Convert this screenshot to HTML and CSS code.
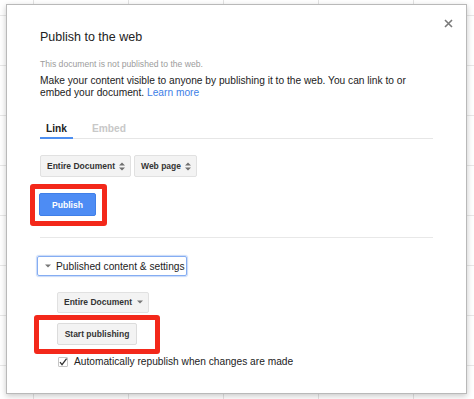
FILE: index.html
```html
<!DOCTYPE html>
<html lang="en">
<head>
<meta charset="utf-8">
<title>Publish to the web</title>
<link rel="stylesheet" href="styles.css">
</head>
<body>
<div class="sheet">
  <div class="dialog">
    <button class="close" aria-label="Close">
      <svg width="9" height="9" viewBox="0 0 9 9"><path d="M1 1L8 8M8 1L1 8" stroke="#7a7a7a" stroke-width="1.6" fill="none"/></svg>
    </button>
    <h1 class="title">Publish to the web</h1>
    <p class="note">This document is not published to the web.</p>
    <p class="desc">Make your content visible to anyone by publishing it to the web. You can link to or<br>embed your document. <a class="link" href="#">Learn more</a></p>

    <div class="tabs">
      <span class="tab active">Link</span>
      <span class="tab">Embed</span>
    </div>

    <div class="selects">
      <span class="select"><span>Entire Document</span><svg class="updown" width="6" height="9" viewBox="0 0 6 9"><path d="M0 3.5L3 0.5L6 3.5Z M0 5.5L3 8.5L6 5.5Z" fill="#6f6f6f"/></svg></span>
      <span class="select"><span>Web page</span><svg class="updown" width="6" height="9" viewBox="0 0 6 9"><path d="M0 3.5L3 0.5L6 3.5Z M0 5.5L3 8.5L6 5.5Z" fill="#6f6f6f"/></svg></span>
    </div>

    <div class="annot annot-publish">
      <button class="btn-blue">Publish</button>
    </div>

    <hr class="divider">

    <div class="toggle">
      <svg class="tri" width="6" height="4" viewBox="0 0 6 4"><path d="M0 0.5H6L3 3.5Z" fill="#777"/></svg>
      <span>Published content &amp; settings</span>
    </div>

    <div class="settings">
      <span class="select select-sm"><span>Entire Document</span><svg class="down" width="6" height="4" viewBox="0 0 6 4"><path d="M0 0.5H6L3 3.5Z" fill="#777"/></svg></span>
    </div>

    <div class="annot annot-start">
      <button class="btn-grey">Start publishing</button>
    </div>

    <label class="check-row">
      <span class="checkbox">
        <svg width="10" height="10" viewBox="0 0 10 10"><path d="M2 5.2L4 7.6L8.6 1.6" stroke="#333" stroke-width="1.3" fill="none"/></svg>
      </span>
      <span>Automatically republish when changes are made</span>
    </label>
  </div>
</div>
</body>
</html>
```

FILE: styles.css
```css
* { box-sizing: border-box; }
html, body { margin: 0; padding: 0; }
body {
  width: 474px;
  height: 399px;
  overflow: hidden;
  font-family: "Liberation Sans", Arial, sans-serif;
  color: #222;
  background-color: #fff;
  background-image:
    linear-gradient(to right, #e3e3e3 1px, transparent 1px),
    linear-gradient(to bottom, #e8e8e8 1px, transparent 1px);
  background-size: 95px 100%, 100% 50px;
  background-position: 33px 0, 0 15px;
}
.sheet {
  padding: 4px 7px 0 6px;
}
.dialog {
  position: relative;
  width: 461px;
  height: 390px;
  background: #fff;
  border: 1px solid #b9b9b9;
  box-shadow: 0 2px 6px rgba(0,0,0,0.22);
  padding: 25px 33px 0 33px;
  display: flex;
  flex-direction: column;
  align-items: flex-start;
}
.close {
  position: absolute;
  top: 14px;
  right: 13px;
  width: 9px;
  height: 9px;
  padding: 0;
  border: 0;
  background: none;
  display: flex;
}
.title {
  margin: 0;
  font-size: 12.5px;
  line-height: 15px;
  font-weight: normal;
  color: #222;
}
.note {
  margin: 14px 0 0;
  font-size: 8.6px;
  line-height: 11px;
  color: #9c9c9c;
}
.desc {
  margin: 5px 0 0;
  font-size: 10.2px;
  line-height: 12px;
  color: #222;
}
.link { color: #3d7ee6; text-decoration: none; }

.tabs {
  margin-top: 24px;
  align-self: stretch;
  display: flex;
  gap: 13px;
  border-bottom: 1px solid #e6e6e6;
}
.tab {
  font-size: 10.2px;
  line-height: 12px;
  font-weight: bold;
  color: #c8c8c8;
  padding: 0 6px 2px;
  margin-bottom: -1px;
  border-bottom: 2px solid transparent;
}
.tab.active {
  color: #222;
  border-bottom-color: #4d8ef0;
}

.selects {
  margin-top: 16px;
  display: flex;
  gap: 3px;
}
.select {
  height: 22px;
  display: inline-flex;
  align-items: center;
  gap: 4px;
  padding: 0 5px 0 6px;
  font-size: 8.5px;
  font-weight: bold;
  color: #333;
  background: #f3f3f3;
  border: 1px solid #e1e1e1;
  border-radius: 2px;
}
.updown { flex: none; }

.annot {
  border: 5px solid #f3281a;
  border-radius: 3px;
  display: flex;
}
.annot-publish {
  margin: 7px 0 0 -10px;
  padding: 4px 6px 5px 4px;
}
.btn-blue {
  width: 57px;
  height: 23px;
  padding: 0;
  font-family: inherit;
  font-size: 8.6px;
  font-weight: bold;
  color: #fff;
  background: #4d8cf4;
  border: 1px solid #3f7fe8;
  border-radius: 2px;
}
.divider {
  margin: 11px 0 0;
  align-self: stretch;
  border: 0;
  height: 1px;
  background: #e8e8e8;
}
.toggle {
  margin: 18px 0 0 -3px;
  width: 150px;
  height: 20px;
  display: flex;
  align-items: center;
  gap: 5px;
  padding-left: 7px;
  font-size: 10.2px;
  white-space: nowrap;
  overflow: hidden;
  border: 1px solid #85adf2;
  box-shadow: 0 0 1px 1px rgba(130,170,240,0.45);
  border-radius: 2px;
}
.tri { flex: none; }
.settings {
  margin: 15px 0 0 17px;
}
.select-sm {
  height: 21px;
  gap: 5px;
  padding: 0 5px 0 6px;
}
.down { flex: none; }
.annot-start {
  margin: 2px 0 0 -6px;
  padding: 3px 18px 4px 18px;
}
.btn-grey {
  width: 80px;
  height: 22px;
  padding: 0;
  font-family: inherit;
  font-size: 8.5px;
  font-weight: bold;
  color: #333;
  background: #f3f3f3;
  border: 1px solid #dcdcdc;
  border-radius: 2px;
}
.check-row {
  margin: 2px 0 0 18px;
  display: flex;
  align-items: center;
  gap: 6px;
  font-size: 10.2px;
  line-height: 12px;
}
.checkbox {
  width: 10px;
  height: 10px;
  border: 1px solid #c6c6c6;
  border-radius: 1px;
  display: flex;
  background: #fff;
}
.checkbox svg { margin: -1px; }
```
